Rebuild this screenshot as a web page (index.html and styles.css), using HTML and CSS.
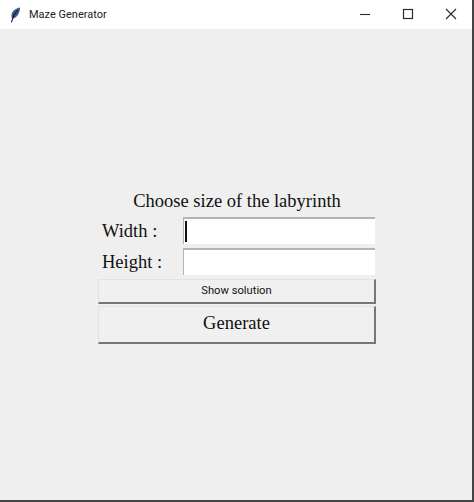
FILE: index.html
```html
<!DOCTYPE html>
<html lang="en">
<head>
    <meta charset="UTF-8">
    <meta name="viewport" content="width=device-width, initial-scale=1.0">
    <title>Maze Generator</title>
    <link rel="stylesheet" href="styles.css">
</head>
<body>
    <div class="window">
        <div class="title-bar">
            <svg class="feather" width="11" height="16" viewBox="0 0 11 16">
                <path d="M10 0.4C6.6 0.8 3 3.2 1.8 6.6 1.2 8.6 1.4 10.4 2.2 11.6 5 11.4 7.6 9.2 8.8 6.2 9.6 4.2 10.2 2.2 10 0.4Z" fill="#3a5b8e"/>
                <path d="M7.8 3 4 8 1.4 15.4" fill="none" stroke="#14181f" stroke-width="1.1"/>
            </svg>
            <span class="title-text">Maze Generator</span>
            <div class="window-buttons">
                <div class="win-btn">
                    <svg width="12" height="12" viewBox="0 0 12 12"><path d="M1 6.5H11" stroke="#2b2b2b" stroke-width="1.1"/></svg>
                </div>
                <div class="win-btn">
                    <svg width="12" height="12" viewBox="0 0 12 12"><rect x="1.5" y="1.5" width="9" height="9" fill="none" stroke="#2b2b2b" stroke-width="1.2"/></svg>
                </div>
                <div class="win-btn">
                    <svg width="12" height="12" viewBox="0 0 12 12"><path d="M1 1 11 11M11 1 1 11" stroke="#2b2b2b" stroke-width="1.1"/></svg>
                </div>
            </div>
        </div>
        <div class="content">
            <div class="form">
                <div class="heading">Choose size of the labyrinth</div>
                <div class="row">
                    <span class="label">Width :</span>
                    <div class="entry"><span class="caret"></span></div>
                </div>
                <div class="row">
                    <span class="label">Height :</span>
                    <div class="entry"></div>
                </div>
                <div class="btn btn-small">Show solution</div>
                <div class="btn btn-big">Generate</div>
            </div>
        </div>
    </div>
</body>
</html>
```

FILE: styles.css
```css
* {
    margin: 0;
    padding: 0;
    box-sizing: border-box;
}
html, body {
    height: 100%;
}
body {
    background-color: #f0f0f0;
    overflow: hidden;
}
.window {
    width: 474px;
    height: 502px;
    display: flex;
    flex-direction: column;
    border-right: 2px solid #444;
    border-bottom: 2px solid #444;
}
.title-bar {
    height: 29px;
    background-color: #fff;
    display: flex;
    align-items: center;
    padding-left: 10px;
}
.feather {
    margin-right: 8px;
}
.title-text {
    font-family: Roboto, "Liberation Sans", sans-serif;
    font-size: 11px;
    color: #222;
}
.window-buttons {
    margin-left: auto;
    display: flex;
    margin-bottom: 1px;
}
.win-btn {
    width: 43px;
    height: 28px;
    display: flex;
    align-items: center;
    justify-content: center;
}
.content {
    flex: 1;
    padding: 160px 0 0 98px;
    background-color: #efefef;
}
.form {
    width: 278px;
    display: flex;
    flex-direction: column;
}
.heading {
    font-family: "Liberation Serif", "Times New Roman", serif;
    font-size: 18.5px;
    line-height: 24px;
    height: 28px;
    color: #111;
    text-align: center;
}
.row {
    display: flex;
    align-items: center;
    height: 27px;
    margin-bottom: 4px;
}
.label {
    font-family: "Liberation Serif", "Times New Roman", serif;
    font-size: 18.5px;
    color: #111;
    width: 85px;
    padding: 2px 0 0 4px;
}
.entry {
    width: 192px;
    height: 27px;
    background-color: #fff;
    border-top: 2px solid #b4b4b4;
    border-left: 1px solid #b4b4b4;
    display: flex;
    align-items: center;
    padding-left: 1px;
}
.caret {
    width: 2px;
    height: 21px;
    background-color: #111;
}
.btn {
    text-align: center;
    background-color: #f0f0f0;
    color: #111;
    border-top: 1px solid #e2e2e2;
    border-left: 1px solid #e2e2e2;
    border-right: 2px solid #777;
    border-bottom: 2px solid #777;
}
.btn-small {
    height: 25px;
    line-height: 22px;
    font-family: Roboto, "Liberation Sans", sans-serif;
    font-size: 11.2px;
    margin-bottom: 2px;
}
.btn-big {
    height: 38px;
    line-height: 33px;
    font-family: "Liberation Serif", "Times New Roman", serif;
    font-size: 18.5px;
}
```
